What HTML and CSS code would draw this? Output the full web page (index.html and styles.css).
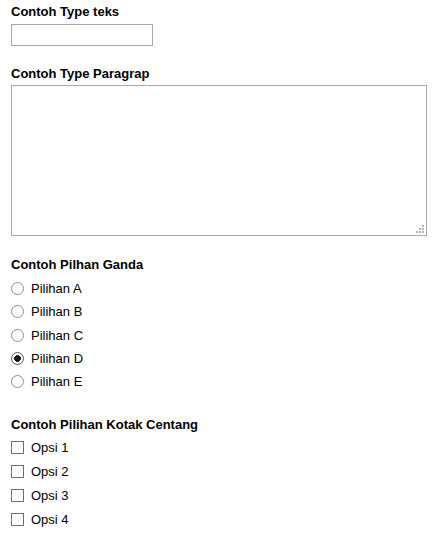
FILE: index.html
```html
<!DOCTYPE html>
<html lang="id">
<head>
    <meta charset="UTF-8">
    <title>Contoh Form</title>
    <link rel="stylesheet" href="styles.css">
</head>
<body>
    <form class="form">
        <div class="item item-text">
            <label class="item-title" for="teks">Contoh Type teks</label>
            <input type="text" id="teks" class="text-input">
        </div>

        <div class="item item-paragraph">
            <label class="item-title" for="paragraf">Contoh Type Paragrap</label>
            <div class="textarea-wrap">
                <textarea id="paragraf" class="textarea"></textarea>
                <svg class="grip" width="9" height="9" viewBox="0 0 9 9">
                    <rect x="7" y="1" width="2" height="2" fill="#b4b4b4"/>
                    <rect x="4" y="4" width="2" height="2" fill="#b4b4b4"/>
                    <rect x="7" y="4" width="2" height="2" fill="#b4b4b4"/>
                    <rect x="1" y="7" width="2" height="2" fill="#b4b4b4"/>
                    <rect x="4" y="7" width="2" height="2" fill="#b4b4b4"/>
                    <rect x="7" y="7" width="2" height="2" fill="#b4b4b4"/>
                </svg>
            </div>
        </div>

        <div class="item item-radio">
            <div class="item-title">Contoh Pilhan Ganda</div>
            <ul class="choices radios">
                <li><label><input type="radio" name="ganda"> Pilihan A</label></li>
                <li><label><input type="radio" name="ganda"> Pilihan B</label></li>
                <li><label><input type="radio" name="ganda"> Pilihan C</label></li>
                <li><label><input type="radio" name="ganda" checked> Pilihan D</label></li>
                <li><label><input type="radio" name="ganda"> Pilihan E</label></li>
            </ul>
        </div>

        <div class="item item-check">
            <div class="item-title">Contoh Pilihan Kotak Centang</div>
            <ul class="choices checks">
                <li><label><input type="checkbox"> Opsi 1</label></li>
                <li><label><input type="checkbox"> Opsi 2</label></li>
                <li><label><input type="checkbox"> Opsi 3</label></li>
                <li><label><input type="checkbox"> Opsi 4</label></li>
            </ul>
        </div>
    </form>
</body>
</html>
```

FILE: styles.css
```css
body {
    margin: 0;
    padding: 4px 6px 0 11px;
    font-family: "Liberation Sans", Arial, sans-serif;
    font-size: 13px;
    color: #000;
    background: #fff;
}

.item-title {
    display: block;
    font-weight: bold;
    font-size: 13px;
    line-height: 16px;
}

.item-text {
    margin-bottom: 20px;
}

.item-text .item-title {
    margin-bottom: 4px;
}

.item-paragraph {
    margin-bottom: 21px;
}

.item-paragraph .item-title {
    margin-bottom: 3px;
}

.item-radio {
    margin-bottom: 24px;
}

.item-radio .item-title {
    margin-bottom: 4px;
}

.item-check .item-title {
    margin-bottom: 2px;
}

.text-input {
    display: block;
    box-sizing: border-box;
    width: 142px;
    height: 22px;
    margin: 0;
    border: 1px solid #a9a9a9;
    padding: 1px 2px;
    font: inherit;
    outline: none;
}

.textarea-wrap {
    position: relative;
    width: 416px;
    height: 151px;
}

.textarea {
    display: block;
    box-sizing: border-box;
    width: 100%;
    height: 100%;
    margin: 0;
    border: 1px solid #a9a9a9;
    padding: 2px;
    font: inherit;
    resize: none;
    outline: none;
}

.grip {
    position: absolute;
    right: 3px;
    bottom: 3px;
}

.choices {
    list-style: none;
    margin: 0;
    padding: 0;
}

.choices li {
    display: flex;
    align-items: center;
    height: 23.3px;
}

.checks li {
    height: 24px;
}

.choices label {
    display: flex;
    align-items: center;
    gap: 7px;
    line-height: 15px;
}

.choices input {
    appearance: none;
    -webkit-appearance: none;
    box-sizing: border-box;
    margin: 0;
    background: #fff;
    flex: none;
}

.radios input {
    width: 13px;
    height: 13px;
    border: 1px solid #8f8f8f;
    border-radius: 50%;
}

.radios input:checked {
    border-color: #555;
    background: radial-gradient(circle, #111 0, #111 3px, #fff 3.6px);
}

.checks input {
    width: 13px;
    height: 13px;
    border: 1px solid #707070;
    border-radius: 0;
}
```
